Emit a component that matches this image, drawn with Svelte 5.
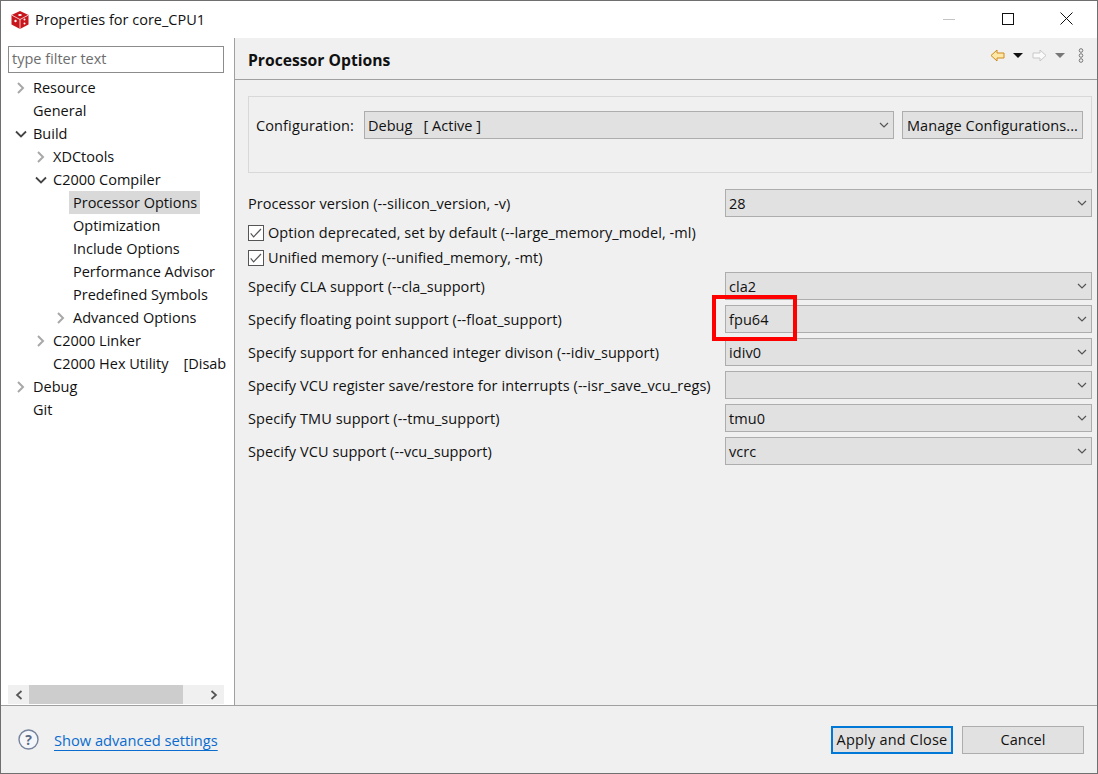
<script>
  const tree = [
    { label: 'Resource', depth: 0, arrow: 'closed' },
    { label: 'General', depth: 0 },
    { label: 'Build', depth: 0, arrow: 'open' },
    { label: 'XDCtools', depth: 1, arrow: 'closed' },
    { label: 'C2000 Compiler', depth: 1, arrow: 'open' },
    { label: 'Processor Options', depth: 2, selected: true },
    { label: 'Optimization', depth: 2 },
    { label: 'Include Options', depth: 2 },
    { label: 'Performance Advisor', depth: 2 },
    { label: 'Predefined Symbols', depth: 2 },
    { label: 'Advanced Options', depth: 2, arrow: 'closed' },
    { label: 'C2000 Linker', depth: 1, arrow: 'closed' },
    { label: 'C2000 Hex Utility    [Disab', depth: 1 },
    { label: 'Debug', depth: 0, arrow: 'closed' },
    { label: 'Git', depth: 0 }
  ];

  const options = [
    { label: 'Specify CLA support (--cla_support)', value: 'cla2' },
    { label: 'Specify floating point support (--float_support)', value: 'fpu64' },
    { label: 'Specify support for enhanced integer divison (--idiv_support)', value: 'idiv0' },
    { label: 'Specify VCU register save/restore for interrupts (--isr_save_vcu_regs)', value: '' },
    { label: 'Specify TMU support (--tmu_support)', value: 'tmu0' },
    { label: 'Specify VCU support (--vcu_support)', value: 'vcrc' }
  ];
</script>

{#snippet chevron()}
  <svg class="chev" width="10" height="6" viewBox="0 0 10 6"><path d="M1 1 L5 5 L9 1" fill="none" stroke="#555" stroke-width="1.2" /></svg>
{/snippet}

{#snippet combo(value)}
  <div class="combo">
    <span class="combo-text">{value}</span>
    {@render chevron()}
  </div>
{/snippet}

{#snippet check(label)}
  <div class="check-row">
    <span class="box">
      <svg width="14" height="14" viewBox="0 0 14 14"><path d="M1.7 7.3 L4.6 10.8 L12 3" fill="none" stroke="#555" stroke-width="1.2" /></svg>
    </span>
    <span>{label}</span>
  </div>
{/snippet}

<div class="window">
  <header class="titlebar">
    <svg class="app-icon" width="20" height="20" viewBox="0 0 20 20">
      <path d="M10 1 L18.5 5 L18.5 14.5 L10 19 L1.5 14.5 L1.5 5 Z" fill="#c8161d" />
      <path d="M10 9.5 L10 19 M1.5 5 L10 9.5 L18.5 5" fill="none" stroke="#f3c4c4" stroke-width="1" />
      <ellipse cx="10" cy="5" rx="1.8" ry="1.1" fill="#fff" />
      <circle cx="5.5" cy="11" r="1.2" fill="#fff" />
      <circle cx="14.5" cy="9.5" r="1" fill="#fff" />
      <circle cx="14.5" cy="13.5" r="1" fill="#fff" />
    </svg>
    <span class="title">Properties for core_CPU1</span>
    <div class="win-controls">
      <span class="win-btn"><svg width="12" height="12" viewBox="0 0 12 12"><path d="M0 6.5 H12" stroke="#c4c4c4" /></svg></span>
      <span class="win-btn"><svg width="12" height="12" viewBox="0 0 12 12"><rect x="0.5" y="0.5" width="11" height="11" fill="none" stroke="#111" /></svg></span>
      <span class="win-btn"><svg width="13" height="13" viewBox="0 0 13 13"><path d="M0.5 0.5 L12.5 12.5 M12.5 0.5 L0.5 12.5" stroke="#111" stroke-width="1" /></svg></span>
    </div>
  </header>

  <div class="main">
    <aside class="sidebar">
      <div class="filter">type filter text</div>
      <ul class="tree">
        {#each tree as item}
          <li class="node" style="padding-left: {item.depth * 20 + 13}px">
            <span class="twist">
              {#if item.arrow === 'closed'}
                <svg width="10" height="12" viewBox="0 0 10 12"><path d="M2 1 L7 6 L2 11" fill="none" stroke="#a8a8a8" stroke-width="2" /></svg>
              {:else if item.arrow === 'open'}
                <svg width="12" height="10" viewBox="0 0 12 10"><path d="M1 2.5 L6 7.5 L11 2.5" fill="none" stroke="#444" stroke-width="1.8" /></svg>
              {/if}
            </span>
            <span class="node-label" class:selected={item.selected}>{item.label}</span>
          </li>
        {/each}
      </ul>
      <div class="hscroll">
        <span class="scroll-arrow">
          <svg width="8" height="12" viewBox="0 0 8 12"><path d="M6.5 2 L2 6 L6.5 10" fill="none" stroke="#555" stroke-width="1.7" /></svg>
        </span>
        <div class="scroll-track"><div class="scroll-thumb"></div></div>
        <span class="scroll-arrow">
          <svg width="8" height="12" viewBox="0 0 8 12"><path d="M1.5 2 L6 6 L1.5 10" fill="none" stroke="#555" stroke-width="1.7" /></svg>
        </span>
      </div>
    </aside>

    <section class="content">
      <div class="page-head">
        <h1>Processor Options</h1>
        <div class="nav">
          <svg width="15" height="13" viewBox="0 0 15 13"><path d="M1 6.5 L7 1 V4 H14 V9 H7 V12 Z" fill="#fde8a8" stroke="#d08a1c" /></svg>
          <svg class="drop" width="10" height="5" viewBox="0 0 10 5"><path d="M0 0 H10 L5 5 Z" fill="#111" /></svg>
          <svg class="fwd" width="15" height="13" viewBox="0 0 15 13"><path d="M14 6.5 L8 1 V4 H1 V9 H8 V12 Z" fill="#fafafa" stroke="#c8c8c8" /></svg>
          <svg class="drop" width="10" height="5" viewBox="0 0 10 5"><path d="M0 0 H10 L5 5 Z" fill="#777" /></svg>
          <svg class="dots" width="6" height="15" viewBox="0 0 6 15">
            <circle cx="3" cy="2.5" r="1.8" fill="none" stroke="#777" />
            <circle cx="3" cy="7.5" r="1.8" fill="none" stroke="#777" />
            <circle cx="3" cy="12.5" r="1.8" fill="none" stroke="#777" />
          </svg>
        </div>
      </div>

      <div class="page-body">
        <div class="config-group">
          <span class="config-label">Configuration:</span>
          <div class="config-combo">{@render combo('Debug   [ Active ]')}</div>
          <button class="btn manage">Manage Configurations...</button>
        </div>

        <div class="form">
          <div class="field">
            <span>Processor version (--silicon_version, -v)</span>
            {@render combo('28')}
          </div>
          {@render check('Option deprecated, set by default (--large_memory_model, -ml)')}
          {@render check('Unified memory (--unified_memory, -mt)')}
          <div class="option-list">
            {#each options as opt}
              <div class="field">
                <span>{opt.label}</span>
                {@render combo(opt.value)}
              </div>
            {/each}
          </div>
          <div class="callout"></div>
        </div>
      </div>
    </section>
  </div>

  <footer class="footer">
    <svg class="help" width="21" height="21" viewBox="0 0 21 21">
      <circle cx="10.5" cy="10.5" r="9.5" fill="#f4f6fa" stroke="#76839c" stroke-width="1.4" />
      <text x="10.5" y="15.5" text-anchor="middle" font-size="14" font-weight="700" fill="#5c6a85" font-family="Open Sans, sans-serif">?</text>
    </svg>
    <span class="link">Show advanced settings</span>
    <div class="footer-actions">
      <button class="btn primary">Apply and Close</button>
      <button class="btn cancel">Cancel</button>
    </div>
  </footer>
</div>

<style>
  :global(body) {
    background: #fff;
  }

  .window {
    width: 1098px;
    height: 774px;
    box-sizing: border-box;
    display: flex;
    flex-direction: column;
    overflow: hidden;
    border: 1px solid #6f6f6f;
    background: #f0f0f0;
    font-family: "Open Sans", "Noto Sans", sans-serif;
    font-size: 14.5px;
    color: #111;
  }

  .titlebar {
    height: 37px;
    flex: none;
    display: flex;
    align-items: center;
    background: #fff;
    padding-left: 9px;
  }

  .app-icon {
    margin-right: 5px;
  }

  .win-controls {
    margin-left: auto;
    margin-right: 1px;
    display: flex;
  }

  .win-btn {
    width: 59px;
    height: 35px;
    padding-bottom: 2px;
    display: flex;
    align-items: center;
    justify-content: center;
  }

  .main {
    flex: 1;
    display: flex;
    min-height: 0;
  }

  .sidebar {
    width: 233px;
    flex: none;
    display: flex;
    flex-direction: column;
    background: #fff;
    border-right: 1px solid #a0a0a0;
  }

  .filter {
    margin: 8px 10px 0 7px;
    height: 25px;
    line-height: 24px;
    border: 1px solid #8c8c8c;
    padding-left: 3px;
    color: #6d6d6d;
    flex: none;
  }

  .tree {
    list-style: none;
    margin: 3px 0 0;
    padding: 0;
    flex: 1;
    overflow: hidden;
  }

  .node {
    height: 23px;
    display: flex;
    align-items: center;
    white-space: pre;
  }

  .twist {
    width: 14px;
    padding-right: 5px;
    flex: none;
    display: flex;
    align-items: center;
    justify-content: center;
  }

  .node-label {
    padding: 0 3px 0 0;
    line-height: 23px;
  }

  .selected {
    background: #d9d9d9;
    margin-left: -4px;
    padding-left: 4px;
  }

  .hscroll {
    flex: none;
    height: 19px;
    margin: 0 10px 1px 7px;
    display: flex;
    background: #f0f0f0;
  }

  .scroll-arrow {
    width: 21px;
    display: flex;
    align-items: center;
    justify-content: center;
    flex: none;
  }

  .scroll-track {
    flex: 1;
  }

  .scroll-thumb {
    width: 154px;
    height: 100%;
    background: #cdcdcd;
  }

  .content {
    flex: 1;
    min-width: 0;
    display: flex;
    flex-direction: column;
  }

  .page-head {
    height: 41px;
    flex: none;
    display: flex;
    align-items: center;
    border-bottom: 1px solid #a0a0a0;
    padding-left: 13px;
  }

  h1 {
    margin: 0;
    padding-top: 2px;
    font-size: 15.7px;
    font-weight: 700;
  }

  .nav {
    margin-left: auto;
    margin-right: 13px;
    margin-bottom: 6px;
    display: flex;
    align-items: center;
    gap: 8px;
  }

  .fwd {
    margin-left: 1px;
  }

  .dots {
    margin-left: 5px;
  }

  .page-body {
    padding: 16px 5px 0 13px;
  }

  .config-group {
    height: 77px;
    box-sizing: border-box;
    border: 1px solid #d8d8d8;
    display: flex;
    align-items: flex-start;
    padding: 14px 8px 0 7px;
    margin-bottom: 16px;
  }

  .config-label {
    line-height: 30px;
    width: 108px;
    flex: none;
    letter-spacing: 0.12px;
  }

  .config-combo {
    flex: 1;
    margin-right: 8px;
  }

  .form {
    position: relative;
    letter-spacing: 0.07px;
  }

  .field {
    display: grid;
    grid-template-columns: 477px 1fr;
    align-items: center;
    height: 28px;
  }

  .combo {
    height: 28px;
    box-sizing: border-box;
    border: 1px solid #adadad;
    background: #e1e1e1;
    display: flex;
    align-items: center;
    padding: 0 4px 0 3px;
    white-space: pre;
  }

  .chev {
    margin-left: auto;
  }

  .check-row {
    height: 25px;
    display: flex;
    align-items: center;
    gap: 4px;
  }

  .check-row:nth-child(2) {
    margin-top: 3px;
  }

  .box {
    width: 16px;
    height: 16px;
    box-sizing: border-box;
    border: 1px solid #555;
    background: #fff;
    display: flex;
    align-items: center;
    justify-content: center;
  }

  .option-list {
    margin-top: 2px;
    display: flex;
    flex-direction: column;
    gap: 5px;
  }

  .callout {
    position: absolute;
    left: 464px;
    top: 106px;
    width: 85px;
    height: 46px;
    box-sizing: border-box;
    border: 4px solid #fe0000;
  }

  .footer {
    flex: none;
    height: 68px;
    box-sizing: border-box;
    border-top: 1px solid #a0a0a0;
    display: flex;
    align-items: center;
    padding: 0 13px 0 17px;
  }

  .help {
    margin-right: 15px;
  }

  .link {
    font-size: 14.65px;
    color: #0a6cce;
    text-decoration: underline;
    text-decoration-thickness: 1px;
    text-underline-offset: 4px;
  }

  .footer-actions {
    margin-left: auto;
    display: flex;
    gap: 9px;
  }

  .btn {
    font: inherit;
    color: inherit;
    height: 28px;
    padding: 0;
    background: #e1e1e1;
    border: 1px solid #adadad;
  }

  .manage {
    width: 181px;
    flex: none;
    letter-spacing: 0.1px;
  }

  .primary {
    width: 122px;
    border: 2px solid #0078d7;
    letter-spacing: 0.2px;
  }

  .cancel {
    width: 122px;
  }
</style>
